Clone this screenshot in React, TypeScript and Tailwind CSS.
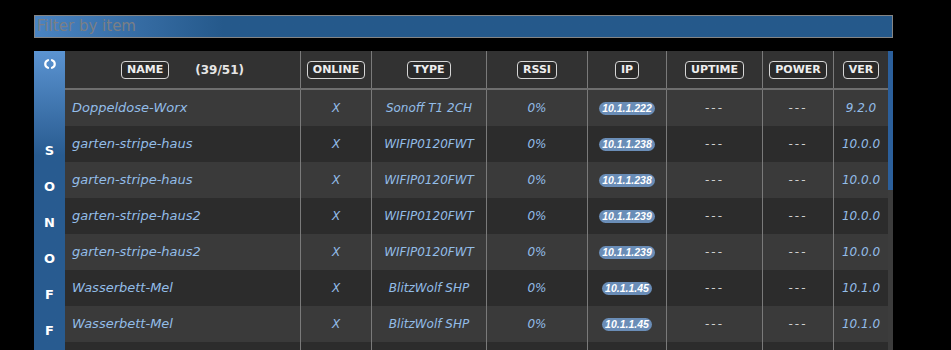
import React from 'react';

interface Device {
  name: string;
  type: string;
  ip: string;
  ver: string;
}

const devices: Device[] = [
  { name: 'Doppeldose-Worx', type: 'Sonoff T1 2CH', ip: '10.1.1.222', ver: '9.2.0' },
  { name: 'garten-stripe-haus', type: 'WIFIP0120FWT', ip: '10.1.1.238', ver: '10.0.0' },
  { name: 'garten-stripe-haus', type: 'WIFIP0120FWT', ip: '10.1.1.238', ver: '10.0.0' },
  { name: 'garten-stripe-haus2', type: 'WIFIP0120FWT', ip: '10.1.1.239', ver: '10.0.0' },
  { name: 'garten-stripe-haus2', type: 'WIFIP0120FWT', ip: '10.1.1.239', ver: '10.0.0' },
  { name: 'Wasserbett-Mel', type: 'BlitzWolf SHP', ip: '10.1.1.45', ver: '10.1.0' },
  { name: 'Wasserbett-Mel', type: 'BlitzWolf SHP', ip: '10.1.1.45', ver: '10.1.0' },
];

const grid = 'grid grid-cols-[236px_71px_115px_101px_79px_96px_71px_54px]';
const cell = 'flex items-center justify-center border-r border-[#7a7a7a] h-full';

const Label: React.FC<{ children: React.ReactNode }> = ({ children }) => (
  <span className="inline-flex items-center h-[18px] px-[5px] rounded-[4px] border border-[#d6d6d6] bg-[#2a2a2a] text-[11px] font-bold text-[#eeeeee] leading-none">
    {children}
  </span>
);

const App: React.FC = () => {
  return (
    <div className="w-[951px] h-[350px] bg-black overflow-hidden font-['DejaVu_Sans',sans-serif]">
      {/* Filter */}
      <div className="pt-[15px] pl-[34px]">
        <div className="w-[859px] h-[23px] border border-[#858585] bg-linear-to-r from-[#4a84c2] to-[#25598b] to-[22%] flex items-center pl-[2px]">
          <span className="text-[15px] text-[#7a7f86] leading-none">Filter by item</span>
        </div>
      </div>

      {/* Table */}
      <div className="mt-[13px] ml-[34px] flex">
        {/* Sidebar */}
        <div className="w-[31px] h-[300px] bg-linear-to-b from-[#5b94d2] to-[#285b90] to-[35%] flex flex-col items-center">
          <svg className="mt-[7px] w-[12px] h-[12px]" viewBox="0 0 12 12" fill="none" stroke="white" strokeWidth="2.2" strokeLinecap="round">
            <path d="M4 2.2 A4 4 0 0 0 4 9.8" />
            <path d="M8 2.2 A4 4 0 0 1 8 9.8" />
          </svg>
          <div className="mt-[63px] flex flex-col">
            {['S', 'O', 'N', 'O', 'F', 'F'].map((l, i) => (
              <span key={i} className="h-[36px] flex items-center justify-center text-[13px] font-semibold text-white">
                {l}
              </span>
            ))}
          </div>
        </div>

        <div className="w-[823px]">
          {/* Header */}
          <div className={`${grid} h-[39px] bg-[#323232] border-b-2 border-[#6e6e6e]`}>
            <div className={`${cell} gap-[26px]`}>
              <Label>NAME</Label>
              <span className="text-[12px] font-bold text-[#e6e6e6]">(39/51)</span>
            </div>
            <div className={cell}><Label>ONLINE</Label></div>
            <div className={cell}><Label>TYPE</Label></div>
            <div className={cell}><Label>RSSI</Label></div>
            <div className={cell}><Label>IP</Label></div>
            <div className={cell}><Label>UPTIME</Label></div>
            <div className={cell}><Label>POWER</Label></div>
            <div className={`${cell} border-r-0`}><Label>VER</Label></div>
          </div>

          {/* Rows */}
          {devices.map((d, i) => (
            <div
              key={i}
              className={`${grid} h-[36px] text-[12px] italic text-[#93bde8] ${i % 2 === 0 ? 'bg-[#3a3a3a]' : 'bg-[#2c2c2c]'}`}
            >
              <div className={`${cell} justify-start pl-[7px] text-[13px]`}>{d.name}</div>
              <div className={cell}>X</div>
              <div className={cell}>{d.type}</div>
              <div className={cell}>0%</div>
              <div className={cell}>
                <span className="h-[13px] px-[3px] rounded-full bg-[#6a8db7] text-white text-[10.5px] font-bold font-['Liberation_Sans',sans-serif] flex items-center leading-none">
                  {d.ip}
                </span>
              </div>
              <div className={`${cell} not-italic tracking-[2px] text-[#cfcfcf]`}>---</div>
              <div className={`${cell} not-italic tracking-[2px] text-[#cfcfcf]`}>---</div>
              <div className={`${cell} border-r-0`}>{d.ver}</div>
            </div>
          ))}
          {/* next row, scrolled below the fold */}
          <div className={`${grid} h-[36px] bg-[#2c2c2c]`}>
            <div className={cell} />
            <div className={cell} />
            <div className={cell} />
            <div className={cell} />
            <div className={cell} />
            <div className={cell} />
            <div className={cell} />
            <div className={`${cell} border-r-0`} />
          </div>
        </div>

        {/* Scrollbar */}
        <div className="w-[5px] h-[300px] flex flex-col">
          <div className="h-[139px] bg-[#2b5f9b]" />
          <div className="flex-1 bg-[#3c3c3c]" />
        </div>
      </div>
    </div>
  );
};

export default App;
